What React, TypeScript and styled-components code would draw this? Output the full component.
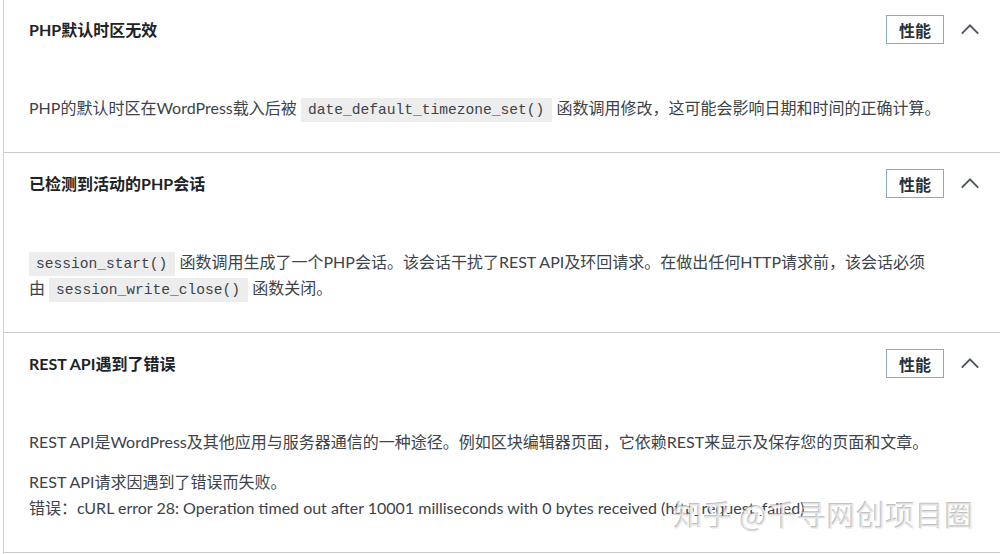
import React from "react";
import styled, { createGlobalStyle } from "styled-components";

const Global = createGlobalStyle`
  html, body { margin: 0; padding: 0; background: #ffffff; overflow: hidden; }
  body { font-family: "Lato", "Noto Sans CJK SC", sans-serif; }
`;

const List = styled.div`
  margin: -1px 0 0 3px;
  border-left: 1px solid #cfd0d2;
  background: #ffffff;
  min-height: 560px;
`;

const Section = styled.section`
  position: relative;
  border-bottom: 1px solid #c9cacc;
`;

const Header = styled.div`
  display: flex;
  align-items: center;
  height: 29px;
  padding: 16px 18px 0 25px;
`;

const Title = styled.h4`
  flex: 1;
  margin: 0;
  font-size: 16px;
  font-weight: 700;
  color: #1d2327;
  line-height: 29px;
`;

const Badge = styled.span`
  display: inline-flex;
  align-items: center;
  box-sizing: border-box;
  height: 29px;
  padding: 0 12px;
  border: 1px solid #86acc0;
  font-size: 16px;
  font-weight: 700;
  color: #2c3338;
`;

const Toggle = styled.span`
  display: inline-flex;
  width: 24px;
  height: 24px;
  margin-left: 14px;
  color: #50575e;
`;

const Panel = styled.div`
  padding: 51px 25px 31px 25px;
`;

const Para = styled.p`
  margin: 0;
  font-size: 16px;
  line-height: 26px;
  height: auto;
  color: #3c434a;
  & + & { margin-top: 14px; }
`;

const Line = styled.span`
  display: block;
  height: 26px;
  white-space: nowrap;
`;

const Code = styled.code`
  font-family: "Liberation Mono", "DejaVu Sans Mono", monospace;
  font-size: 14.6px;
  line-height: 1;
  background: #ededed;
  color: #3c434a;
  padding: 4px 8px 4px 7px;
`;

const Watermark = styled.div`
  position: absolute;
  left: 670px;
  top: 160px;
  font-family: "Noto Sans CJK SC", sans-serif;
  font-size: 29px;
  letter-spacing: 0.5px;
  color: rgba(235, 235, 235, 0.75);
  text-shadow: -1px -1px 0 rgba(140, 140, 140, 0.55), 1px 1px 0 rgba(255, 255, 255, 0.9);
  white-space: nowrap;
  pointer-events: none;
`;

const Chevron = () => (
  <svg width="24" height="24" viewBox="0 0 24 24" fill="none">
    <path d="M3.8 15.6 L12 7.4 L20.2 15.6" stroke="currentColor" strokeWidth="2" />
  </svg>
);

type ItemProps = { title: string; children: React.ReactNode; overlay?: React.ReactNode };

const Item = ({ title, children, overlay }: ItemProps) => (
  <Section>
    <Header>
      <Title>{title}</Title>
      <Badge>性能</Badge>
      <Toggle>
        <Chevron />
      </Toggle>
    </Header>
    <Panel>{children}</Panel>
    {overlay}
  </Section>
);

export default function App() {
  return (
    <>
      <Global />
      <List>
        <Item title="PHP默认时区无效">
          <Para>
            <Line>
              PHP的默认时区在WordPress载入后被 <Code>date_default_timezone_set()</Code> 函数调用修改，这可能会影响日期和时间的正确计算。
            </Line>
          </Para>
        </Item>
        <Item title="已检测到活动的PHP会话">
          <Para>
            <Line>
              <Code>session_start()</Code> 函数调用生成了一个PHP会话。该会话干扰了REST API及环回请求。在做出任何HTTP请求前，该会话必须
            </Line>
            <Line>
              由 <Code>session_write_close()</Code> 函数关闭。
            </Line>
          </Para>
        </Item>
        <Item title="REST API遇到了错误" overlay={<Watermark>知乎 @千寻网创项目圈</Watermark>}>
          <Para>
            <Line>REST API是WordPress及其他应用与服务器通信的一种途径。例如区块编辑器页面，它依赖REST来显示及保存您的页面和文章。</Line>
          </Para>
          <Para>
            <Line>REST API请求因遇到了错误而失败。</Line>
            <Line>
              错误：cURL error 28: Operation timed out after 10001 milliseconds with 0 bytes received (http_request_failed)
            </Line>
          </Para>
        </Item>
      </List>
    </>
  );
}
